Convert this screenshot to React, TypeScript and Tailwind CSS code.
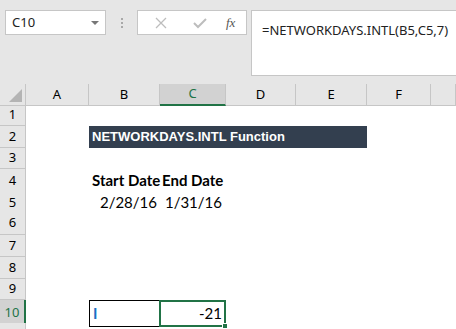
import React from 'react';

const cols = ['A', 'B', 'C', 'D', 'E', 'F', ''];
const rowHeights = [21, 22, 21, 22, 21, 23, 22, 22, 21, 23, 22];

const cellFont = { fontFamily: 'Lato, "Liberation Sans", sans-serif' };
const uiFont = { fontFamily: '"Noto Sans", "Open Sans", sans-serif' };

function FormulaBar() {
  return (
    <div className="flex h-[84px] bg-[#e6e6e6] pt-[10px]" style={uiFont}>
      <div className="ml-[5px] flex h-[25px] w-[101px] items-center justify-between border border-[#c6c6c6] bg-white pl-[6px] pr-[6px]">
        <span className="text-[13px] text-[#222]">C10</span>
        <span className="h-0 w-0 border-x-[4px] border-t-[4px] border-x-transparent border-t-[#777]" />
      </div>
      <div className="flex h-[25px] w-[31px] flex-col items-center justify-center gap-[2px]">
        <span className="h-[2px] w-[2px] bg-[#a8a8a8]" />
        <span className="h-[2px] w-[2px] bg-[#a8a8a8]" />
        <span className="h-[2px] w-[2px] bg-[#a8a8a8]" />
      </div>
      <div className="flex h-[25px] w-[110px] items-center border border-[#c6c6c6] bg-white">
        <svg width="12" height="12" viewBox="0 0 12 12" className="ml-[17px]">
          <path d="M1 1 L11 11 M11 1 L1 11" stroke="#bdbdbd" strokeWidth="1.3" />
        </svg>
        <svg width="14" height="12" viewBox="0 0 14 12" className="ml-[26px]">
          <path d="M1 6 L5 10 L13 2" stroke="#bdbdbd" strokeWidth="2" fill="none" />
        </svg>
        <span
          className="ml-[19px] text-[13px] italic text-[#555]"
          style={{ fontFamily: '"Liberation Serif", serif' }}
        >
          fx
        </span>
      </div>
      <div className="ml-[4px] h-[66px] flex-1 border border-r-0 border-[#c6c6c6] bg-white pl-[10px] pt-[6px]">
        <span className="text-[13px] text-[#222]">=NETWORKDAYS.INTL(B5,C5,7)</span>
      </div>
    </div>
  );
}

function Header() {
  return (
    <div className="grid h-[21px] grid-cols-[26px_63px_71px_66px_70px_71px_64px_1fr] bg-[#e6e6e6] text-[13px] text-black" style={uiFont}>
      <div className="relative border-r border-b border-[#c6c6c6]">
        <svg width="13" height="13" viewBox="0 0 13 13" className="absolute bottom-[3px] right-[3px]">
          <path d="M13 0 L13 13 L0 13 Z" fill="#b4b4b4" />
        </svg>
      </div>
      {cols.map((c, i) =>
        c === 'C' ? (
          <div key={i} className="flex items-center justify-center border-r border-[#c6c6c6] border-b-2 border-b-[#217346] bg-[#d2d2d2] text-[#217346]">
            {c}
          </div>
        ) : (
          <div key={i} className="flex items-center justify-center border-r border-b border-[#c6c6c6]">
            {c}
          </div>
        )
      )}
    </div>
  );
}

function Row({ n, h, children }: { n: number; h: number; children?: React.ReactNode }) {
  const sel = n === 10;
  return (
    <div className="grid grid-cols-[26px_63px_71px_66px_70px_71px_64px_1fr]" style={{ height: h }}>
      <div
        className={
          sel
            ? 'flex items-center justify-center border-b border-[#c6c6c6] border-r-2 border-r-[#217346] bg-[#d2d2d2] text-[13px] text-[#217346]'
            : 'flex items-center justify-center border-r border-b border-[#c6c6c6] bg-[#e6e6e6] text-[13px] text-black'
        }
        style={uiFont}
      >
        {n < 11 ? n : null}
      </div>
      {children}
    </div>
  );
}

export default function App() {
  return (
    <div className="h-[329px] w-[456px] overflow-hidden bg-white">
      <FormulaBar />
      <Header />
      <Row n={1} h={rowHeights[0]} />
      <Row n={2} h={rowHeights[1]}>
        <div />
        <div
          className="col-span-4 flex items-center bg-[#333f4f] pl-[3px] text-[13px] font-bold text-white"
          style={{ fontFamily: '"Liberation Sans", Arial, sans-serif' }}
        >
          NETWORKDAYS.INTL Function
        </div>
      </Row>
      <Row n={3} h={rowHeights[2]} />
      <Row n={4} h={rowHeights[3]}>
        <div />
        <div className="flex items-end whitespace-nowrap pb-[1px] pl-[3px] text-[15px] font-bold text-black" style={cellFont}>
          Start Date
        </div>
        <div className="flex items-end whitespace-nowrap pb-[1px] pl-[2px] text-[15px] font-bold text-black" style={cellFont}>
          End Date
        </div>
      </Row>
      <Row n={5} h={rowHeights[4]}>
        <div />
        <div className="flex items-end justify-end pb-[1px] pr-[3px] text-[15px] text-black" style={cellFont}>
          2/28/16
        </div>
        <div className="flex items-end justify-end pb-[1px] pr-[4px] text-[15px] text-black" style={cellFont}>
          1/31/16
        </div>
      </Row>
      <Row n={6} h={rowHeights[5]} />
      <Row n={7} h={rowHeights[6]} />
      <Row n={8} h={rowHeights[7]} />
      <Row n={9} h={rowHeights[8]} />
      <Row n={10} h={rowHeights[9]}>
        <div />
        <div className="flex items-center border border-black pl-[3px] text-[15px] font-bold text-[#1a6fc4]" style={cellFont}>
          I
        </div>
        <div className="relative -ml-px flex items-center justify-end border-2 border-[#217346] pr-[2px] text-[15px] text-black" style={cellFont}>
          -21
          <span className="absolute -bottom-[4px] -right-[4px] h-[6px] w-[6px] border border-white bg-[#217346]" />
        </div>
      </Row>
      <Row n={11} h={rowHeights[10]} />
    </div>
  );
}
